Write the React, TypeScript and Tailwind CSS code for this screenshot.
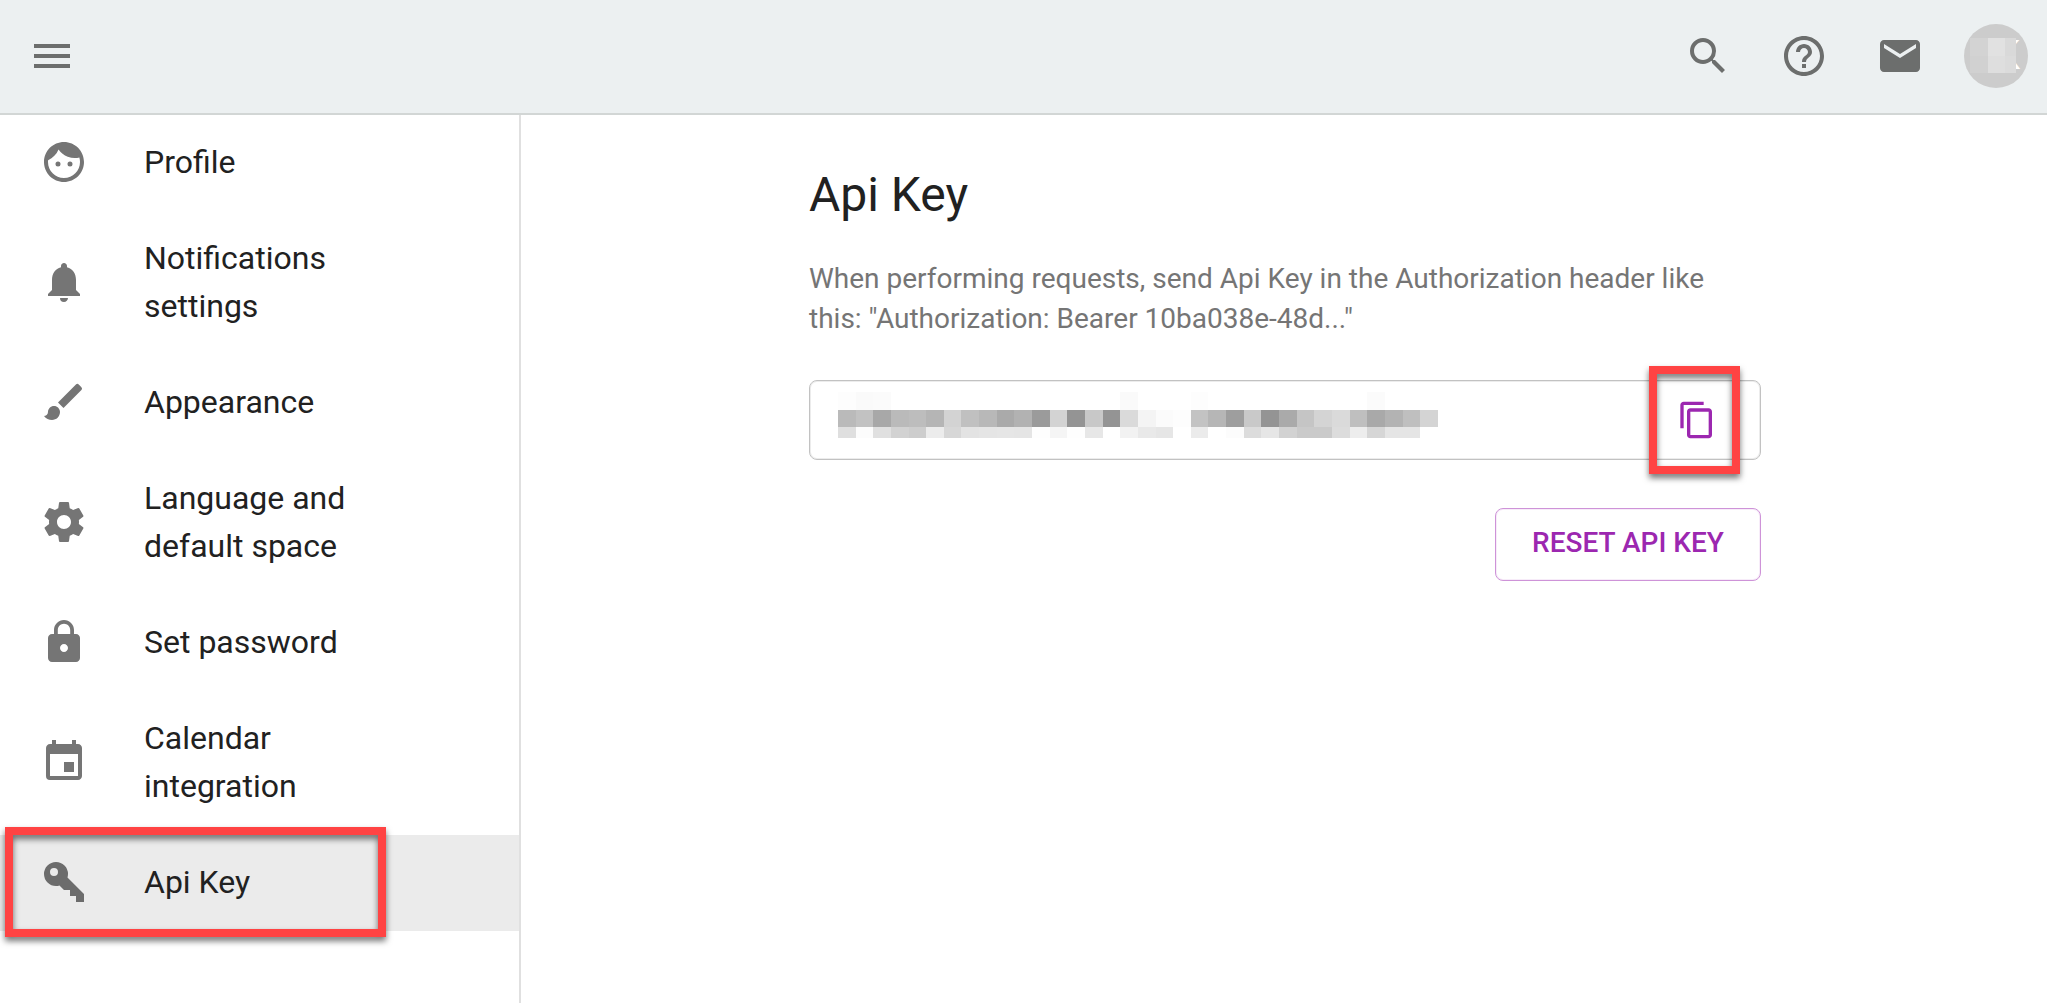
import type { ReactNode } from "react"
import {
  MdBrush,
  MdContentCopy,
  MdEmail,
  MdEvent,
  MdFace,
  MdHelpOutline,
  MdLock,
  MdMenu,
  MdNotifications,
  MdSearch,
} from "react-icons/md"

interface NavItem {
  label: string
  icon: ReactNode
  active?: boolean
}

function CogIcon() {
  return (
    <svg viewBox="0 0 24 24" fill="currentColor" className="size-12" aria-hidden="true">
      <path d="M19.43 12.98c.04-.32.07-.64.07-.98s-.03-.66-.07-.98l2.11-1.65c.19-.15.24-.42.12-.64l-2-3.46c-.12-.22-.39-.3-.61-.22l-2.49 1c-.52-.4-1.08-.73-1.69-.98l-.38-2.65C14.46 2.18 14.25 2 14 2h-4c-.25 0-.46.18-.49.42l-.38 2.65c-.61.25-1.17.59-1.69.98l-2.49-1c-.23-.09-.49 0-.61.22l-2 3.46c-.13.22-.07.49.12.64l2.11 1.65c-.04.32-.07.65-.07.98s.03.66.07.98l-2.11 1.65c-.19.15-.24.42-.12.64l2 3.46c.12.22.39.3.61.22l2.49-1c.52.4 1.08.73 1.69.98l.38 2.65c.03.24.24.42.49.42h4c.25 0 .46-.18.49-.42l.38-2.65c.61-.25 1.17-.59 1.69-.98l2.49 1c.23.09.49 0 .61-.22l2-3.46c.12-.22.07-.49-.12-.64l-2.11-1.65zM12 15.5c-1.93 0-3.5-1.57-3.5-3.5s1.57-3.5 3.5-3.5 3.5 1.57 3.5 3.5-1.57 3.5-3.5 3.5z" />
    </svg>
  )
}

function KeyIcon() {
  return (
    <svg viewBox="0 0 24 24" fill="currentColor" className="size-12" aria-hidden="true">
      <path d="M22,18V22H18V19H15V16H12L9.74,13.74C9.19,13.91 8.61,14 8,14A6,6 0 0,1 2,8A6,6 0 0,1 8,2A6,6 0 0,1 14,8C14,8.61 13.91,9.19 13.74,9.74L22,18M7,5A2,2 0 0,0 5,7A2,2 0 0,0 7,9A2,2 0 0,0 9,7A2,2 0 0,0 7,5Z" />
    </svg>
  )
}

const navItems: NavItem[] = [
  { label: "Profile", icon: <MdFace className="size-12" /> },
  { label: "Notifications settings", icon: <MdNotifications className="size-12" /> },
  { label: "Appearance", icon: <MdBrush className="size-12" /> },
  { label: "Language and default space", icon: <CogIcon /> },
  { label: "Set password", icon: <MdLock className="size-12" /> },
  { label: "Calendar integration", icon: <MdEvent className="size-12" /> },
  { label: "Api Key", icon: <KeyIcon />, active: true },
]

// Shades of the hidden key, one list per mosaic row
const maskTop = [
  "#fdfdfd", "#fafafa", "#fbfbfb", "#fff", "#fff", "#fff", "#fff", "#fff", "#fff", "#fff", "#fff", "#fff",
  "#fff", "#fff", "#fff", "#fff", "#fafafa", "#fff", "#fff", "#fff", "#fdfdfd", "#fff", "#fff", "#fff",
  "#fff", "#fff", "#fff", "#fff", "#fff", "#fff", "#fbfbfb", "#fff", "#fff", "#fff",
]
const maskMiddle = [
  "#bababa", "#c2c2c2", "#a8a8a8", "#bababa", "#bdbdbd", "#b5b5b5", "#d3d3d3", "#c0c0c0", "#b8b8b8", "#aaaaaa", "#b2b2b2", "#9b9b9b",
  "#d3d3d3", "#949494", "#c8c8c8", "#949494", "#dadada", "#f4f4f4", "#fbfbfb", "#fdfdfd", "#c3c3c3", "#b6b6b6", "#9e9e9e", "#c9c9c9",
  "#949494", "#aaaaaa", "#c5c5c5", "#d4d4d4", "#dadada", "#bfbfbf", "#a9a9a9", "#b3b3b3", "#bfbfbf", "#d4d4d4",
]
const maskBottom = [
  "#dfdfdf", "#fcfcfc", "#e0e0e0", "#d2d2d2", "#cdcdcd", "#ececec", "#d7d7d7", "#e3e3e3", "#e5e5e5", "#e6e6e6", "#e5e5e5", "#fefefe",
  "#f5f5f5", "#fefefe", "#e7e7e7", "#fff", "#f2f2f2", "#e9e9e9", "#e6e6e6", "#fff", "#ebebeb", "#fff", "#fcfcfc", "#dcdcdc",
  "#e6e6e6", "#d2d2d2", "#cacaca", "#cacaca", "#dcdcdc", "#ededed", "#d6d6d6", "#e5e5e5", "#e5e5e5", "#fff",
]

function MaskRow({ shades, className }: { shades: string[]; className: string }) {
  return (
    <div className={`flex ${className}`}>
      {shades.map((shade, i) => (
        <span key={i} className="flex-1" style={{ backgroundColor: shade }}></span>
      ))}
    </div>
  )
}

function Highlight({ className }: { className: string }) {
  return (
    <div
      className={`pointer-events-none absolute z-10 border-8 border-[#ff4343] drop-shadow-[0_4px_3px_rgba(0,0,0,0.55)] ${className}`}
    ></div>
  )
}

function HeaderButton({ label, children }: { label: string; children: ReactNode }) {
  return (
    <button type="button" aria-label={label} className="flex size-24 items-center justify-center rounded-full">
      {children}
    </button>
  )
}

function Avatar() {
  return (
    <span className="relative flex size-16 items-center justify-end overflow-hidden rounded-full bg-[#cccccc] pr-2 text-[40px] leading-none text-white">
      K
      <span className="absolute top-3.5 left-1.5 grid h-[35px] w-[46px] grid-cols-[18px_17px_11px] grid-rows-2">
        <span className="bg-[#d3d3d3]"></span>
        <span className="bg-[#e1e1e1]"></span>
        <span className="bg-[#d9d9d9]"></span>
        <span className="bg-[#d1d1d1]"></span>
        <span className="bg-[#dedede]"></span>
        <span className="bg-[#dbdbdb]"></span>
      </span>
    </span>
  )
}

export default function App() {
  return (
    <div className="flex min-h-screen flex-col bg-white font-[Roboto,sans-serif] text-[#212121]">
      <header className="flex items-center justify-between border-b-2 border-[#d2d6d5] bg-[#ecf0f1] pt-2 pr-[3px] pb-[9px] pl-1 text-[#6c6e6d]">
        <HeaderButton label="Menu">
          <MdMenu className="size-12" />
        </HeaderButton>
        <div className="flex">
          <HeaderButton label="Search">
            <MdSearch className="size-12" />
          </HeaderButton>
          <HeaderButton label="Help">
            <MdHelpOutline className="size-12" />
          </HeaderButton>
          <HeaderButton label="Messages">
            <MdEmail className="size-12" />
          </HeaderButton>
          <HeaderButton label="Account">
            <Avatar />
          </HeaderButton>
        </div>
      </header>

      <div className="flex flex-1">
        <nav className="w-[521px] shrink-0 border-r-2 border-[#e0e0e0]">
          <ul>
            {navItems.map((item) => (
              <li key={item.label} className="relative">
                <a
                  href="#"
                  aria-current={item.active ? "page" : undefined}
                  className={`flex items-center gap-14 pt-[23px] pr-32 pb-[25px] pl-10 text-[32px] leading-[48px] ${item.active ? "bg-[#ebebeb]" : ""}`}
                >
                  <span className={`shrink-0 ${item.active ? "text-[#6c6c6c]" : "text-[#757575]"}`}>{item.icon}</span>
                  {item.label}
                </a>
                {item.active && <Highlight className="-top-2 -bottom-1.5 left-[5px] w-[381px]" />}
              </li>
            ))}
          </ul>
        </nav>

        <main className="flex-1 pt-12 pl-0.5">
          <div className="mx-auto max-w-[952px]">
            <h1 className="text-[48px] leading-[64px]">Api Key</h1>
            <p className="mt-8 text-[28px] leading-10 text-[#757575]">
              When performing requests, send Api Key in the Authorization header like this: "Authorization: Bearer
              10ba038e-48d..."
            </p>

            <div className="relative mt-[41px] flex h-20 items-center rounded-lg border border-[#c2c2c2] pr-[27px] shadow-[inset_0_0_0_1px_#ececec]">
              <input
                type="text"
                readOnly
                aria-label="Api Key"
                className="h-full min-w-0 flex-1 bg-transparent px-7 text-[32px] outline-none"
              />
              {/* Hidden key value */}
              <div className="pointer-events-none absolute top-[11px] left-7 w-[600px]">
                <MaskRow shades={maskTop} className="h-[18px]" />
                <MaskRow shades={maskMiddle} className="h-[17px]" />
                <MaskRow shades={maskBottom} className="h-[11px]" />
              </div>
              <div className="relative">
                <button
                  type="button"
                  aria-label="Copy Api Key"
                  className="flex size-[72px] items-center justify-center rounded-full text-[#9c27b0]"
                >
                  <MdContentCopy className="size-10" />
                </button>
                <Highlight className="-inset-y-[18px] -right-[7px] -left-3" />
              </div>
            </div>

            <div className="mt-12 flex justify-end">
              <button
                type="button"
                className="h-[73px] min-w-[266px] rounded-lg border border-[#ce93d8] px-7 pb-1 text-[28px] leading-[49px] font-medium text-[#9c27b0] uppercase shadow-[inset_0_0_0_1px_#f7ecf9]"
              >
                Reset Api Key
              </button>
            </div>
          </div>
        </main>
      </div>
    </div>
  )
}
